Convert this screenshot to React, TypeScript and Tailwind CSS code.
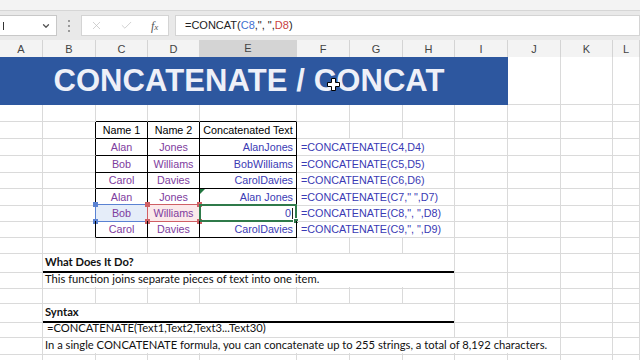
import React from 'react';
import { X, Check, ChevronDown } from 'lucide-react';

// column widths A..L : 43 53 52 52 97 53 53 52 53 53 52 rest
const GRID = 'grid grid-cols-[43px_53px_52px_52px_97px_53px_53px_52px_53px_53px_52px_1fr]';
const LETTERS = ['A', 'B', 'C', 'D', 'E', 'F', 'G', 'H', 'I', 'J', 'K', 'L'];

const PURPLE = 'text-[#7e3c9e]';
const BLUE = 'text-[#3a3ab4]';

const DATA = [
  { n1: 'Alan', n2: 'Jones', out: 'AlanJones', f: '=CONCATENATE(C4,D4)', h: 'h-[17px]' },
  { n1: 'Bob', n2: 'Williams', out: 'BobWilliams', f: '=CONCATENATE(C5,D5)', h: 'h-[16px]' },
  { n1: 'Carol', n2: 'Davies', out: 'CarolDavies', f: '=CONCATENATE(C6,D6)', h: 'h-[17px]' },
  { n1: 'Alan', n2: 'Jones', out: 'Alan Jones', f: '=CONCATENATE(C7," ",D7)', h: 'h-[16px]' },
  { n1: 'Bob', n2: 'Williams', out: '0', f: '=CONCATENATE(C8,", ",D8)', h: 'h-[16px]' },
  { n1: 'Carol', n2: 'Davies', out: 'CarolDavies', f: '=CONCATENATE(C9,", ",D9)', h: 'h-[17px]' },
];

type Edge = 'g' | 'k' | 'k2';

const R_EDGE: Record<string, string> = {
  g: 'border-r border-r-[#dadada]',
  k: 'border-r border-r-black',
};
const B_EDGE: Record<string, string> = {
  g: 'border-b border-b-[#dadada]',
  k: 'border-b border-b-black',
  k2: 'border-b-2 border-b-black',
};

function Cell({
  r = 'g',
  b = 'g',
  className = '',
  children,
}: {
  r?: Edge;
  b?: Edge;
  className?: string;
  children?: React.ReactNode;
}) {
  return (
    <div className={`relative flex items-center min-w-0 whitespace-nowrap ${R_EDGE[r]} ${B_EDGE[b]} ${className}`}>
      {children}
    </div>
  );
}

function Blank({ n }: { n: number }) {
  return (
    <>
      {Array.from({ length: n }).map((_, i) => (
        <Cell key={i} />
      ))}
    </>
  );
}

function Handle({ className }: { className: string }) {
  return <span className={`absolute w-[5px] h-[5px] ${className}`} />;
}

function FormulaBar() {
  return (
    <div className="flex items-center h-[29px] bg-[#e9e9e9]">
      <div className="ml-[-1px] w-[58px] h-[21px] bg-white border border-[#c8c8c8] flex items-center justify-between">
        {/* the tail of the cell name, scrolled off the left edge */}
        <span className="ml-[3px] w-[1px] h-[8px] bg-[#333]" />
        <ChevronDown size={10} strokeWidth={3} className="mr-[5px] text-[#555]" />
      </div>
      <div className="w-[24px] flex flex-col items-center gap-[3px]">
        <span className="w-[2px] h-[2px] bg-[#9a9a9a]" />
        <span className="w-[2px] h-[2px] bg-[#9a9a9a]" />
        <span className="w-[2px] h-[2px] bg-[#9a9a9a]" />
      </div>
      <div className="w-[88px] h-[21px] bg-white border border-[#d4d4d4] flex items-center">
        <X size={13} strokeWidth={1.3} className="ml-[8px] text-[#bdbdbd]" />
        <Check size={13} strokeWidth={1.3} className="ml-[17px] text-[#bdbdbd]" />
        <span className="ml-[18px] text-[12px] italic text-[#555] font-['Liberation_Serif',serif]">
          f<span className="text-[9px]">x</span>
        </span>
      </div>
      <div className="ml-[6px] flex-1 h-[21px] bg-white border border-[#d4d4d4] flex items-center pl-[9px] text-[11px] text-[#222]">
        =CONCAT(<span className="text-[#3f6fcf]">C8</span>,", ",<span className="text-[#c8423f]">D8</span>)
      </div>
    </div>
  );
}

function ColumnHeaders() {
  return (
    <div className={`${GRID} h-[17px] bg-[#f3f3f3] text-[11px] text-[#444]`}>
      {LETTERS.map((l) => (
        <div
          key={l}
          className={`flex items-center justify-center border-r border-[#d4d4d4] ${
            l === 'E' ? 'bg-[#d4d4d4] border-b-2 border-b-[#9cc3a9]' : ''
          }`}
        >
          {l}
        </div>
      ))}
    </div>
  );
}

export default function App() {
  return (
    <div className="relative w-[640px] h-[360px] overflow-hidden bg-white font-['Liberation_Sans',Arial,sans-serif]">
      {/* ribbon edge */}
      <div className="h-[11px] bg-[#f3f3f3] border-b border-[#d6d6d6]" />
      <FormulaBar />
      <ColumnHeaders />

      {/* row 1 : banner */}
      <div className={`${GRID} h-[48px]`}>
        <div className="col-span-9 bg-[#2d579f] flex items-center justify-center">
          <span className="text-[31px] font-bold text-[#eef0f8] tracking-[0.1px] pr-[10px]">
            CONCATENATE / CONCAT
          </span>
        </div>
        <Blank n={3} />
      </div>

      {/* row 2 */}
      <div className={`${GRID} h-[17px]`}>
        <Cell />
        <Cell />
        <Cell b="k" />
        <Cell b="k" />
        <Cell b="k" />
        <Blank n={7} />
      </div>

      {/* row 3 : table head */}
      <div className={`${GRID} h-[17px] text-[10.75px] text-black`}>
        <Cell />
        <Cell r="k" />
        <Cell r="k" b="k" className="justify-center">Name 1</Cell>
        <Cell r="k" b="k" className="justify-center">Name 2</Cell>
        <Cell r="k" b="k" className="justify-center">Concatenated Text</Cell>
        <Blank n={7} />
      </div>

      {/* rows 4-9 */}
      {DATA.map((d, i) => {
        const active = i === 4;
        return (
          <div key={i} className={`${GRID} ${d.h} text-[10.75px]`}>
            <Cell />
            <Cell r="k" />
            <Cell r="k" b="k" className={`justify-center ${PURPLE} ${active ? 'bg-[#e5edf9]' : ''}`}>
              {d.n1}
              {active && (
                <span className="absolute -left-px -top-px -right-px -bottom-px border border-[#5a82d2]">
                  <Handle className="-left-[3px] -top-[3px] bg-[#5a82d2]" />
                  <Handle className="-right-[3px] -top-[3px] bg-[#5a82d2]" />
                  <Handle className="-left-[3px] -bottom-[3px] bg-[#5a82d2]" />
                  <Handle className="-right-[3px] -bottom-[3px] bg-[#5a82d2]" />
                </span>
              )}
            </Cell>
            <Cell r="k" b="k" className={`justify-center ${PURPLE} ${active ? 'bg-[#fbe9ea]' : ''}`}>
              {d.n2}
              {active && (
                <span className="absolute -left-px -top-px -right-px -bottom-px border border-[#cf5f64]">
                  <Handle className="-left-[3px] -top-[3px] bg-[#cf5f64]" />
                  <Handle className="-right-[3px] -top-[3px] bg-[#cf5f64]" />
                  <Handle className="-left-[3px] -bottom-[3px] bg-[#cf5f64]" />
                  <Handle className="-right-[3px] -bottom-[3px] bg-[#cf5f64]" />
                </span>
              )}
            </Cell>
            <Cell r="k" b="k" className={`justify-end pr-[3px] ${BLUE}`}>
              {i === 3 && (
                <span className="absolute left-0 top-0 w-0 h-0 border-t-[5px] border-r-[5px] border-t-[#21763f] border-r-transparent" />
              )}
              {d.out}
              {active && (
                <>
                  <span className="ml-px w-px h-[11px] bg-[#222]" />
                  <span className="absolute -left-px -top-px -right-px -bottom-px border-2 border-[#2f7a4a]">
                    <span className="absolute -right-[4px] -bottom-[4px] w-[6px] h-[6px] bg-[#2f7a4a] border border-white" />
                  </span>
                </>
              )}
            </Cell>
            <Cell className={`col-span-3 pl-[4px] ${BLUE}`}>{d.f}</Cell>
            <Blank n={4} />
          </div>
        );
      })}

      {/* row 10 */}
      <div className={`${GRID} h-[16px]`}>
        <Blank n={12} />
      </div>

      {/* rows 11-16 : notes */}
      <div className="font-['Lato','Liberation_Sans',sans-serif] text-[11.2px] text-[#111]">
        <div className={`${GRID} h-[17px]`}>
          <Cell />
          <Cell b="k2" className="col-span-7 pl-[2px] font-bold">What Does It Do?</Cell>
          <Blank n={4} />
        </div>
        <div className={`${GRID} h-[16px]`}>
          <Cell />
          <Cell className="col-span-7 pl-[2px]">This function joins separate pieces of text into one item.</Cell>
          <Blank n={4} />
        </div>
        <div className={`${GRID} h-[17px]`}>
          <Blank n={12} />
        </div>
        <div className={`${GRID} h-[16px]`}>
          <Cell />
          <Cell b="k2" className="col-span-7 pl-[2px] font-bold">Syntax</Cell>
          <Blank n={4} />
        </div>
        <div className={`${GRID} h-[17px]`}>
          <Cell />
          <Cell className="col-span-7 pl-[4px]">=CONCATENATE(Text1,Text2,Text3...Text30)</Cell>
          <Blank n={4} />
        </div>
        <div className={`${GRID} h-[16px]`}>
          <Cell />
          <Cell className="col-span-9 pl-[2px]">
            In a single CONCATENATE formula, you can concatenate up to 255 strings, a total of 8,192 characters.
          </Cell>
          <Blank n={2} />
        </div>
        <div className={`${GRID} h-[17px]`}>
          <Blank n={12} />
        </div>
      </div>

      {/* mouse pointer over the banner */}
      <svg className="absolute left-[327px] top-[78px]" width="13" height="13" viewBox="0 0 13 13">
        <path
          d="M4.5 0.5h4v4h4v4h-4v4h-4v-4h-4v-4h4z"
          fill="#ffffff"
          stroke="#000000"
          strokeWidth="1"
        />
      </svg>
    </div>
  );
}
